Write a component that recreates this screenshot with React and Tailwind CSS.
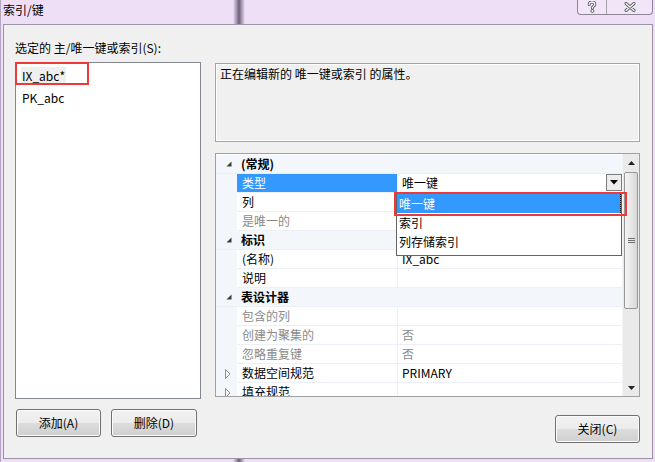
import React from "react";

const rows = [
  { cat: true, name: "(常规)" },
  { name: "类型", value: "唯一键", selected: true },
  { name: "列" },
  { name: "是唯一的", gray: true },
  { cat: true, name: "标识" },
  { name: "(名称)", value: "IX_abc" },
  { name: "说明" },
  { cat: true, name: "表设计器" },
  { name: "包含的列", gray: true },
  { name: "创建为聚集的", gray: true, value: "否" },
  { name: "忽略重复键", gray: true, value: "否" },
  { name: "数据空间规范", value: "PRIMARY", collapsed: true },
  { name: "填充规范", collapsed: true },
];

function Expanded() {
  return (
    <svg width="6" height="6" viewBox="0 0 6 6">
      <polygon points="5.5,0.5 5.5,5.5 0.5,5.5" fill="#3a3a3a" />
    </svg>
  );
}

function Collapsed() {
  return (
    <svg width="6" height="10" viewBox="0 0 6 10">
      <polygon points="0.5,0.5 5,5 0.5,9.5" fill="none" stroke="#8f8f8f" strokeWidth="1" />
    </svg>
  );
}

function GridRow({ r }) {
  if (r.cat) {
    return (
      <div className="flex h-[19px] shrink-0 bg-[#f3f6fb] border-b border-[#eceff5]">
        <div className="w-[21px] flex items-center justify-end pr-[5px] pb-[1px]">
          <Expanded />
        </div>
        <div className="flex-1 pl-[4px] text-[12px] leading-[18px] font-bold text-black">{r.name}</div>
      </div>
    );
  }
  return (
    <div className="flex h-[19px] shrink-0">
      <div className="w-[21px] bg-[#f3f6fb] flex items-center justify-end pr-[6px]">
        {r.collapsed ? <Collapsed /> : null}
      </div>
      <div
        className={
          "w-[161px] pl-[5px] text-[12px] leading-[18px] border-r border-b border-[#eceff5] " +
          (r.selected ? "bg-[#3399ff] text-white" : r.gray ? "text-[#8a8a8a]" : "text-black")
        }
      >
        {r.name}
      </div>
      <div
        className={
          "flex-1 flex items-start pl-[4px] text-[12px] leading-[18px] border-b border-[#eceff5] " +
          (r.gray ? "text-[#8a8a8a]" : "text-black")
        }
      >
        <span className="flex-1">{r.value || ""}</span>
        {r.selected ? (
          <div className="w-[16px] h-[17px] border border-[#7d7d7d] bg-[#ececec] flex items-center justify-center">
            <svg width="8" height="5" viewBox="0 0 8 5">
              <polygon points="0,0 8,0 4,4.5" fill="#000" />
            </svg>
          </div>
        ) : null}
      </div>
    </div>
  );
}

function WinButton({ children, className }) {
  return (
    <div
      className={
        "h-[28px] flex items-center justify-center rounded-[3px] border border-[#707070] text-[12px] leading-[16px] text-black bg-[linear-gradient(180deg,#f2f2f2_0%,#ebebeb_50%,#dddddd_50%,#cfcfcf_100%)] shadow-[inset_0_0_0_1px_#fbfbfb] " +
        (className || "")
      }
    >
      {children}
    </div>
  );
}

export default function App() {
  return (
    <div className="relative w-[655px] h-[462px] overflow-hidden bg-[#eedff7] font-['Noto_Sans_CJK_SC','Microsoft_YaHei',sans-serif] text-black border-l border-[#b4a6c0]">
      {/* background window shadow stripe */}
      <div className="absolute left-[232px] top-0 w-[12px] h-[25px] bg-[linear-gradient(90deg,transparent,#6b607c,transparent)]" />
      <div className="absolute left-[232px] bottom-0 w-[12px] h-[5px] bg-[linear-gradient(90deg,transparent,#6b607c,transparent)]" />

      {/* title bar */}
      <div className="relative flex h-[24px] justify-between pl-[2px] pr-[2px]">
        <div className="pt-[2px] text-[12px] leading-[16px] text-black">索引/键</div>
        <div className="flex h-[15px] border border-t-0 border-[#8e8497] rounded-b-[4px] bg-[#f1e6f8] overflow-hidden">
          <div className="w-[28px] flex items-center justify-center">
            <svg width="10" height="12" viewBox="0 0 10 12">
              <path
                d="M2.2 3.6 C2.2 1.8 3.6 1 5 1 C6.6 1 7.8 1.9 7.8 3.4 C7.8 5 5.4 5.3 5.4 7.2"
                fill="none"
                stroke="#5a5a5a"
                strokeWidth="3"
                strokeLinecap="round"
              />
              <path
                d="M2.2 3.6 C2.2 1.8 3.6 1 5 1 C6.6 1 7.8 1.9 7.8 3.4 C7.8 5 5.4 5.3 5.4 7.2"
                fill="none"
                stroke="#f6f6f6"
                strokeWidth="1.3"
                strokeLinecap="round"
              />
              <circle cx="5.4" cy="10" r="1.5" fill="#f6f6f6" stroke="#5a5a5a" strokeWidth="0.9" />
            </svg>
          </div>
          <div className="w-[46px] border-l border-[#a89fb0] flex items-center justify-center">
            <svg width="12" height="10" viewBox="0 0 12 10">
              <path d="M2 1.5 L10 8.5 M10 1.5 L2 8.5" stroke="#5a5a5a" strokeWidth="3" strokeLinecap="round" />
              <path d="M2 1.5 L10 8.5 M10 1.5 L2 8.5" stroke="#f4f4f4" strokeWidth="1.4" strokeLinecap="round" />
            </svg>
          </div>
        </div>
      </div>

      {/* client area */}
      <div className="relative ml-[2px] mr-[2px] h-[435px] border border-[#9c94a4] bg-[#f0f0f0] flex pl-[11px] pr-[12px]">
        {/* left column */}
        <div className="w-[186px] flex flex-col">
          <div className="mt-[15px] h-[16px] text-[12px] leading-[16px] whitespace-nowrap">选定的 主/唯一键或索引(S):</div>
          <div className="relative mt-[6px] h-[337px] border border-[#828790] bg-white pt-[1px]">
            <div className="h-[22px] flex items-center pl-[5px]">
              <span className="bg-[#efefef] px-[1px] text-[12px] leading-[17px]">IX_abc*</span>
            </div>
            <div className="h-[22px] flex items-center pl-[6px] text-[12px] leading-[17px]">PK_abc</div>
            <div className="absolute left-[-1px] top-[-1px] w-[74px] h-[23px] border-2 border-[#ef3838]" />
          </div>
          <div className="mt-[10px] flex gap-[10px] pl-[1px]">
            <WinButton className="w-[85px]">添加(A)</WinButton>
            <WinButton className="w-[86px]">删除(D)</WinButton>
          </div>
        </div>

        {/* right column */}
        <div className="ml-[14px] w-[425px] flex flex-col">
          <div className="mt-[38px] h-[79px] border border-[#a5a5a5] shadow-[inset_1px_1px_0_#ffffff,inset_-1px_-1px_0_#ffffff] pl-[4px] pt-[2px] text-[12px] leading-[16px]">
            正在编辑新的 唯一键或索引 的属性。
          </div>

          <div className="relative mt-[11px] h-[244px] border border-[#a0a0a0] bg-white flex">
            <div className="flex-1 flex flex-col pt-[1px] overflow-hidden">
              {rows.map((r, i) => (
                <GridRow key={i} r={r} />
              ))}
            </div>
            {/* scrollbar */}
            <div className="w-[17px] flex flex-col bg-[#eaeaea] border-l border-[#f3f3f3]">
              <div className="h-[17px] flex items-center justify-center">
                <svg width="7" height="4" viewBox="0 0 7 4">
                  <polygon points="0,4 7,4 3.5,0" fill="#222" />
                </svg>
              </div>
              <div className="mt-[1px] mx-[1px] h-[137px] rounded-[2px] border border-[#979797] bg-[linear-gradient(90deg,#f4f4f4,#e4e4e4_60%,#d6d6d6)] flex items-center justify-center">
                <svg width="7" height="6" viewBox="0 0 7 6">
                  <path d="M0 0.5 H7 M0 2.5 H7 M0 4.5 H7" stroke="#6f6f6f" strokeWidth="1" />
                </svg>
              </div>
              <div className="flex-1" />
              <div className="h-[17px] flex items-center justify-center">
                <svg width="7" height="4" viewBox="0 0 7 4">
                  <polygon points="0,0 7,0 3.5,4" fill="#222" />
                </svg>
              </div>
            </div>

            {/* dropdown list */}
            <div className="absolute left-[180px] top-[39px] w-[226px] h-[63px] border border-[#646464] bg-white flex flex-col">
              <div className="h-[19px] bg-[#3399ff] text-white text-[12px] leading-[19px] pl-[2px] border-r border-dotted border-[#111]">唯一键</div>
              <div className="h-[19px] text-[12px] leading-[19px] pl-[2px]">索引</div>
              <div className="h-[19px] text-[12px] leading-[19px] pl-[2px]">列存储索引</div>
            </div>
            <div className="absolute left-[178px] top-[38px] w-[233px] h-[24px] border-2 border-[#ef3838]" />
          </div>

          <div className="mt-[18px] flex justify-end">
            <WinButton className="w-[85px]">关闭(C)</WinButton>
          </div>
        </div>
      </div>
    </div>
  );
}
